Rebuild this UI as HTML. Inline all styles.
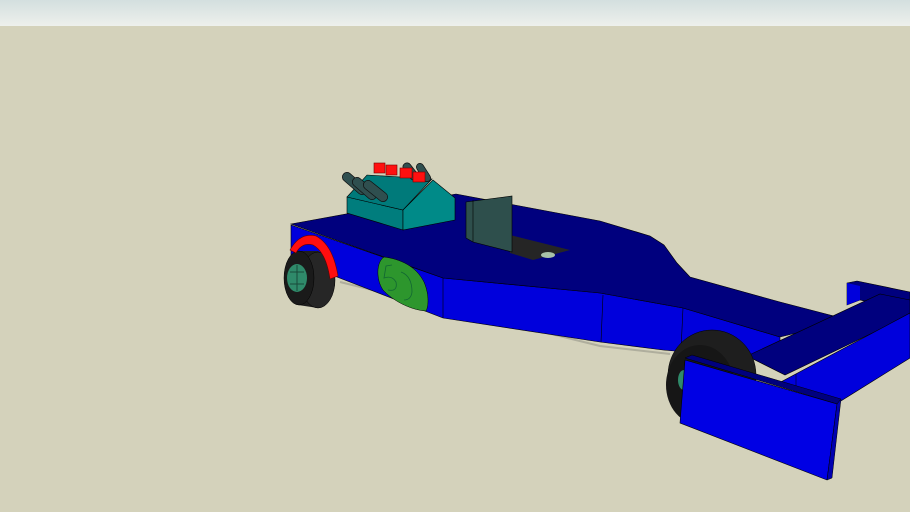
<!DOCTYPE html>
<html><head><meta charset="utf-8"><style>
html,body{margin:0;padding:0;width:910px;height:512px;overflow:hidden;background:#d4d2bb}
svg{display:block}
</style></head><body>
<svg width="910" height="512" viewBox="0 0 910 512" xmlns="http://www.w3.org/2000/svg">
<defs>
<linearGradient id="sky" x1="0" y1="0" x2="0" y2="1"><stop offset="0" stop-color="#d3dfdf"/><stop offset="1" stop-color="#edf0ec"/></linearGradient>
</defs>
<rect x="0" y="0" width="910" height="26" fill="url(#sky)"/>
<rect x="0" y="26" width="910" height="486" fill="#d4d2bb"/>
<path d="M340 282 L600 346 L670 354" stroke="#8a8a80" stroke-width="2" fill="none" opacity="0.5"/>
<!-- body side -->
<path d="M291 225 L443 278 L600 293 L683 308 L780 337 L780 360 L663 350 L600 342 L443 318 L337 277 L291 262 Z" fill="#0000dc" stroke="#000" stroke-width="0.6"/>
<line x1="443" y1="278" x2="443" y2="318" stroke="#000" stroke-width="0.6"/>
<line x1="603" y1="295" x2="601" y2="342" stroke="#000" stroke-width="0.6"/>
<line x1="683" y1="308" x2="681" y2="350" stroke="#000" stroke-width="0.6"/>
<!-- body top -->
<path d="M291 224 L456 194 L600 221 L650 236 L664 245 L677 263 L690 277 L780 302 L830 315 L850 320 L780 337 L683 308 L600 293 L443 278 Z" fill="#00007e" stroke="#000" stroke-width="0.6"/>
<!-- cockpit -->
<path d="M510 235 L570 250 L533 260 L510 253 Z" fill="#252525"/>
<ellipse cx="548" cy="255" rx="7" ry="3" fill="#a8c0a8"/>
<!-- seat -->
<path d="M466 202 L512 196 L512 252 L473 242 L466 238 Z" fill="#2e4f4c" stroke="#000" stroke-width="0.6"/>
<line x1="473" y1="200" x2="473" y2="242" stroke="#000" stroke-width="0.6"/>
<!-- engine -->
<path d="M347 197 L403 210 L403 230 L347 213 Z" fill="#007d7d" stroke="#000" stroke-width="0.6"/>
<path d="M347 197 L367 175 L432 179 L403 210 Z" fill="#007a7a" stroke="#000" stroke-width="0.6"/>
<path d="M403 210 L433 180 L455 198 L455 220 L403 230 Z" fill="#008a88" stroke="#000" stroke-width="0.6"/>
<!-- pipes -->
<g stroke-linecap="round" fill="none">
<line x1="347" y1="177" x2="362" y2="190" stroke="#111" stroke-width="10"/>
<line x1="347" y1="177" x2="362" y2="190" stroke="#2f4f4f" stroke-width="8.5"/>
<line x1="357" y1="182" x2="372" y2="195" stroke="#111" stroke-width="10"/>
<line x1="357" y1="182" x2="372" y2="195" stroke="#2f4f4f" stroke-width="8.5"/>
<line x1="368" y1="185" x2="383" y2="197" stroke="#111" stroke-width="10"/>
<line x1="368" y1="185" x2="383" y2="197" stroke="#2f4f4f" stroke-width="8.5"/>
<line x1="407" y1="167" x2="414" y2="176" stroke="#111" stroke-width="9"/>
<line x1="407" y1="167" x2="414" y2="176" stroke="#2f4f4f" stroke-width="7.5"/>
<line x1="420" y1="167" x2="427" y2="178" stroke="#111" stroke-width="8"/>
<line x1="420" y1="167" x2="427" y2="178" stroke="#2f4f4f" stroke-width="6.5"/>
</g>
<g fill="#ff1010" stroke="#700" stroke-width="0.6">
<rect x="374" y="163" width="11" height="10"/>
<rect x="386" y="165" width="11" height="10"/>
<rect x="400" y="168" width="12" height="10"/>
<rect x="413" y="172" width="12" height="10"/>
</g>
<!-- green oval 5 -->
<path d="M384 257 C400 259 416 266 424 282 C430 296 428 308 426 311 C410 310 392 300 383 290 C376 280 376 262 384 257 Z" fill="#2d962d" stroke="#000" stroke-width="0.5"/>
<path d="M392 265 L386 266 L384 278 Q392 275 396 282 Q398 292 388 290" stroke="#163" fill="none" stroke-width="0.8"/>
<path d="M401 272 Q412 276 412 292 Q411 300 404 300" stroke="#163" fill="none" stroke-width="0.8"/>
<!-- front wheel -->
<path d="M298 251 L318 251 Q335 262 335 280 Q335 300 318 308 L298 305 Z" fill="#1e1e1e"/>
<ellipse cx="318" cy="280" rx="17" ry="28" fill="#262626" stroke="#000" stroke-width="0.5"/>
<ellipse cx="299" cy="278" rx="15" ry="27" fill="#1a1a1a" stroke="#000" stroke-width="0.5"/>
<ellipse cx="297" cy="278" rx="10" ry="14" fill="#2f8a6a"/>
<path d="M290 272 L304 272 M290 284 L304 284 M297 265 L297 291" stroke="#1a4a3a" stroke-width="1"/>
<!-- fender -->
<path d="M290 250 Q300 232 316 236 Q333 245 338 276 L330 279 Q326 252 313 245 Q302 242 296 253 Z" fill="#ff0e0e" stroke="#600" stroke-width="0.6"/>
<!-- rear box upright -->
<path d="M847 283 L857 281 L910 292 L910 312 L860 300 L847 305 Z" fill="#00007e" stroke="#000" stroke-width="0.6"/>
<path d="M847 283 L847 305 L860 300 L860 286 Z" fill="#0000dc"/>
<!-- bar -->
<path d="M747 356 L880 294 L910 300 L910 315 L785 375 Z" fill="#00007e" stroke="#000" stroke-width="0.6"/>
<!-- rear wheel -->
<ellipse cx="712" cy="375" rx="44" ry="45" fill="#1e1e1e" stroke="#000" stroke-width="0.5"/>
<ellipse cx="700" cy="385" rx="34" ry="40" fill="#161616"/>
<ellipse cx="684" cy="380" rx="6" ry="10" fill="#2f8a6a"/>
<!-- bar side blue -->
<path d="M777 384 L910 313 L910 358 L836 404 Z" fill="#0000dc" stroke="#000" stroke-width="0.6"/>
<line x1="796" y1="374" x2="796" y2="392" stroke="#000" stroke-width="0.5"/>
<!-- front plate -->
<path d="M685 358 L692 355 L841 399 L837 404 Z" fill="#00007e" stroke="#000" stroke-width="0.5"/>
<path d="M685 360 L837 404 L827 480 L680 423 Z" fill="#0000e4" stroke="#000" stroke-width="0.6"/>
<path d="M837 404 L841 399 L832 478 L827 480 Z" fill="#0000b0" stroke="#000" stroke-width="0.5"/>
</svg>
</body></html>
